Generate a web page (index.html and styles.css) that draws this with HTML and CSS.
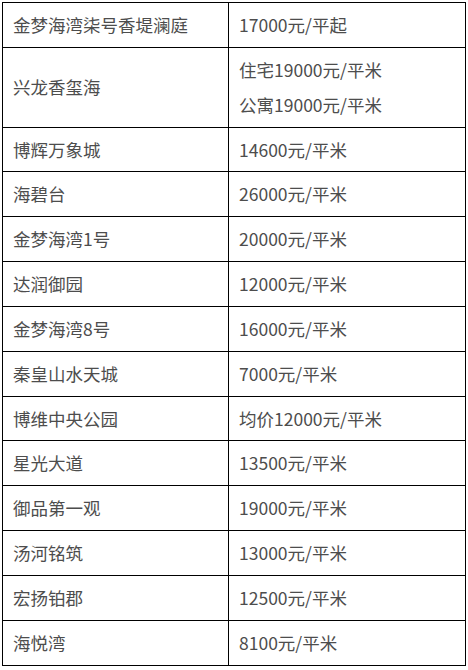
FILE: index.html
```html
<!DOCTYPE html>
<html lang="zh-CN">
<head>
<meta charset="utf-8">
<link rel="stylesheet" href="styles.css">
</head>
<body>
<table class="price-table">
  <colgroup><col class="col-name"><col class="col-price"></colgroup>
  <tbody>
    <tr><td>金梦海湾柒号香堤澜庭</td><td>17000元/平起</td></tr>
    <tr><td>兴龙香玺海</td><td>住宅19000元/平米<br>公寓19000元/平米</td></tr>
    <tr><td>博辉万象城</td><td>14600元/平米</td></tr>
    <tr><td>海碧台</td><td>26000元/平米</td></tr>
    <tr><td>金梦海湾1号</td><td>20000元/平米</td></tr>
    <tr><td>达润御园</td><td>12000元/平米</td></tr>
    <tr><td>金梦海湾8号</td><td>16000元/平米</td></tr>
    <tr><td>秦皇山水天城</td><td>7000元/平米</td></tr>
    <tr><td>博维中央公园</td><td>均价12000元/平米</td></tr>
    <tr><td>星光大道</td><td>13500元/平米</td></tr>
    <tr><td>御品第一观</td><td>19000元/平米</td></tr>
    <tr><td>汤河铭筑</td><td>13000元/平米</td></tr>
    <tr><td>宏扬铂郡</td><td>12500元/平米</td></tr>
    <tr><td>海悦湾</td><td>8100元/平米</td></tr>
  </tbody>
</table>
</body>
</html>
```
FILE: styles.css
```css
html, body {
  background: #ffffff;
}
body {
  margin: 2px;
  font-family: "Noto Sans CJK SC", "Noto Sans", sans-serif;
  font-size: 17.5px;
  color: #4d4d4d;
}
.price-table {
  width: 464px;
  border-collapse: collapse;
  table-layout: fixed;
}
.col-name {
  width: 226px;
}
.price-table td {
  border: 1px solid #000000;
  padding: 5px 10px 4px 10px;
  line-height: 34.85px;
  vertical-align: middle;
  white-space: nowrap;
}
```
